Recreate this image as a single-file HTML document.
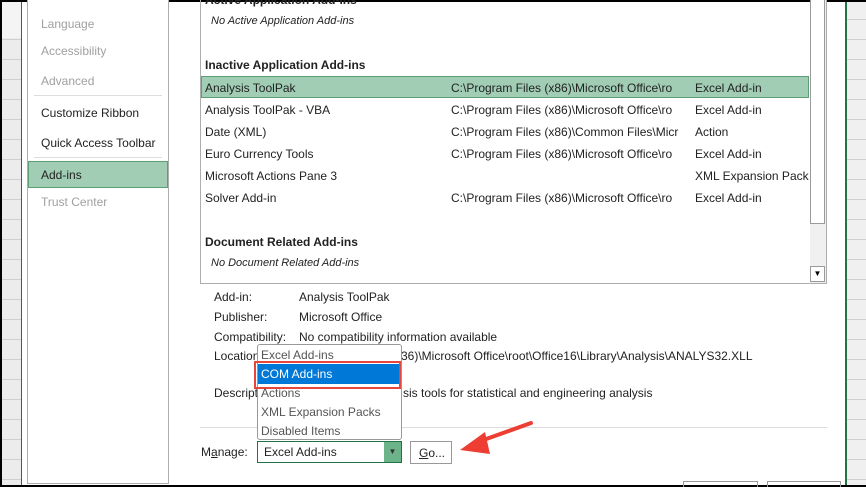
<!DOCTYPE html><html><head><style>
body{margin:0;width:866px;height:487px;overflow:hidden;background:#000;font-family:"Liberation Sans",sans-serif;position:relative}
div{box-sizing:border-box}
.a{position:absolute}
.t{position:absolute;font-size:12px;color:#222;white-space:nowrap}
.g{color:#a0a0a0}
</style></head><body>
<div class="a" style="left:2px;top:0;width:19px;height:487px;background:repeating-linear-gradient(to bottom,#ececec 0 19px,#cfcfcf 19px 20px);"></div>
<div class="a" style="left:2px;top:2px;width:19px;height:36px;background:#f4f4f4"></div>
<div class="a" style="left:21px;top:0;width:1px;height:487px;background:#217346"></div>
<div class="a" style="left:22px;top:2px;width:823px;height:483px;background:#fff"></div>
<div class="a" style="left:845px;top:0;width:21px;height:487px;background:repeating-linear-gradient(to bottom,#f0f0f0 0 19px,#d0d0d0 19px 20px)"></div>
<div class="a" style="left:845px;top:0;width:2px;height:487px;background:#217346"></div>
<div class="a" style="left:0;top:0;width:866px;height:2px;background:#000"></div>
<div class="a" style="left:0;top:485px;width:866px;height:2px;background:#000"></div>
<div class="a" style="left:27px;top:0;width:142px;height:484px;border:1px solid #adadad;border-top:none;background:#fff"></div>
<div class="t g" style="left:41px;top:17px">Language</div>
<div class="t g" style="left:41px;top:44px">Accessibility</div>
<div class="t g" style="left:41px;top:74px">Advanced</div>
<div class="a" style="left:34px;top:95px;width:128px;height:1px;background:#ddd"></div>
<div class="t" style="left:41px;top:106px">Customize Ribbon</div>
<div class="t" style="left:41px;top:136px">Quick Access Toolbar</div>
<div class="a" style="left:34px;top:157px;width:128px;height:1px;background:#ddd"></div>
<div class="a" style="left:28px;top:161px;width:140px;height:27px;background:#a0cdb3;border:1px solid #5d9e77"></div>
<div class="t" style="left:41px;top:168px">Add-ins</div>
<div class="t g" style="left:41px;top:195px">Trust Center</div>
<div class="a" style="left:200px;top:0;width:627px;height:284px;border:1px solid #adadad;border-top:none"></div>
<div class="a" style="left:810px;top:0;width:16px;height:283px;background:#f0f0f0"></div>
<div class="a" style="left:810px;top:0;width:15px;height:224px;background:#fff;border:1px solid #9a9a9a;border-top:none"></div>
<div class="a" style="left:810px;top:266px;width:15px;height:16px;background:#fff;border:1px solid #9a9a9a;font-size:8px;text-align:center;line-height:14px">▼</div>
<div class="t" style="left:205px;top:-7px;font-weight:bold">Active Application Add-ins</div>
<div class="t" style="left:211px;top:15px;font-size:11px;font-style:italic">No Active Application Add-ins</div>
<div class="t" style="left:205px;top:58px;font-weight:bold">Inactive Application Add-ins</div>
<div class="a" style="left:201px;top:76px;width:608px;height:22px;background:#a0cdb3;border:1px solid #5d9e77"></div>
<div class="t" style="left:205px;top:81px">Analysis ToolPak</div><div class="t" style="left:451px;top:81px">C:\Program Files (x86)\Microsoft Office\ro</div><div class="t" style="left:695px;top:81px">Excel Add-in</div>
<div class="t" style="left:205px;top:103px">Analysis ToolPak - VBA</div><div class="t" style="left:451px;top:103px">C:\Program Files (x86)\Microsoft Office\ro</div><div class="t" style="left:695px;top:103px">Excel Add-in</div>
<div class="t" style="left:205px;top:125px">Date (XML)</div><div class="t" style="left:451px;top:125px">C:\Program Files (x86)\Common Files\Micr</div><div class="t" style="left:695px;top:125px">Action</div>
<div class="t" style="left:205px;top:147px">Euro Currency Tools</div><div class="t" style="left:451px;top:147px">C:\Program Files (x86)\Microsoft Office\ro</div><div class="t" style="left:695px;top:147px">Excel Add-in</div>
<div class="t" style="left:205px;top:169px">Microsoft Actions Pane 3</div><div class="t" style="left:695px;top:169px">XML Expansion Pack</div>
<div class="t" style="left:205px;top:191px">Solver Add-in</div><div class="t" style="left:451px;top:191px">C:\Program Files (x86)\Microsoft Office\ro</div><div class="t" style="left:695px;top:191px">Excel Add-in</div>
<div class="t" style="left:205px;top:235px;font-weight:bold">Document Related Add-ins</div>
<div class="t" style="left:211px;top:257px;font-size:11px;font-style:italic">No Document Related Add-ins</div>
<div class="t" style="left:214px;top:290px">Add-in:</div><div class="t" style="left:299px;top:290px">Analysis ToolPak</div>
<div class="t" style="left:214px;top:310px">Publisher:</div><div class="t" style="left:299px;top:310px">Microsoft Office</div>
<div class="t" style="left:214px;top:330px">Compatibility:</div><div class="t" style="left:299px;top:330px">No compatibility information available</div>
<div class="t" style="left:214px;top:349px">Location:</div><div class="t" style="left:401px;top:349px">36)\Microsoft Office\root\Office16\Library\Analysis\ANALYS32.XLL</div>
<div class="t" style="left:214px;top:386px">Description:</div><div class="t" style="left:403px;top:386px">sis tools for statistical and engineering analysis</div>
<div class="a" style="left:200px;top:427px;width:627px;height:1px;background:#ddd"></div>
<div class="t" style="left:201px;top:445px">M<u>a</u>nage:</div>
<div class="a" style="left:257px;top:441px;width:145px;height:22px;border:1px solid #217346;background:#fff"></div>
<div class="t" style="left:264px;top:445px">Excel Add-ins</div>
<div class="a" style="left:384px;top:442px;width:17px;height:20px;background:#6db38a;font-size:8px;text-align:center;line-height:20px;color:#333">▼</div>
<div class="a" style="left:410px;top:441px;width:42px;height:23px;border:1px solid #999;background:#fff"></div>
<div class="t" style="left:419px;top:446px"><u>G</u>o...</div>
<div class="a" style="left:683px;top:481px;width:75px;height:6px;border:1px solid #999;border-bottom:none"></div>
<div class="a" style="left:767px;top:481px;width:74px;height:6px;border:1px solid #999;border-bottom:none"></div>
<div class="a" style="left:257px;top:344px;width:145px;height:96px;background:#fff;border:1px solid #999;border-radius:3px"></div>
<div class="t" style="left:261px;top:348px;color:#555">Excel Add-ins</div>
<div class="a" style="left:258px;top:364px;width:142px;height:20px;background:#0078d7"></div>
<div class="t" style="left:261px;top:367px;color:#fff">COM Add-ins</div>
<div class="a" style="left:254px;top:361px;width:147px;height:28px;border:2px solid #e8453c"></div>
<div class="t" style="left:261px;top:386px;color:#555">Actions</div>
<div class="t" style="left:261px;top:405px;color:#555">XML Expansion Packs</div>
<div class="t" style="left:261px;top:424px;color:#555">Disabled Items</div>
<svg class="a" style="left:455px;top:420px" width="80" height="40"><line x1="76" y1="3" x2="20" y2="23" stroke="#ee3d32" stroke-width="4" stroke-linecap="round"/><polygon points="5,30 30,12 35,34" fill="#ee3d32"/></svg>
</body></html>
